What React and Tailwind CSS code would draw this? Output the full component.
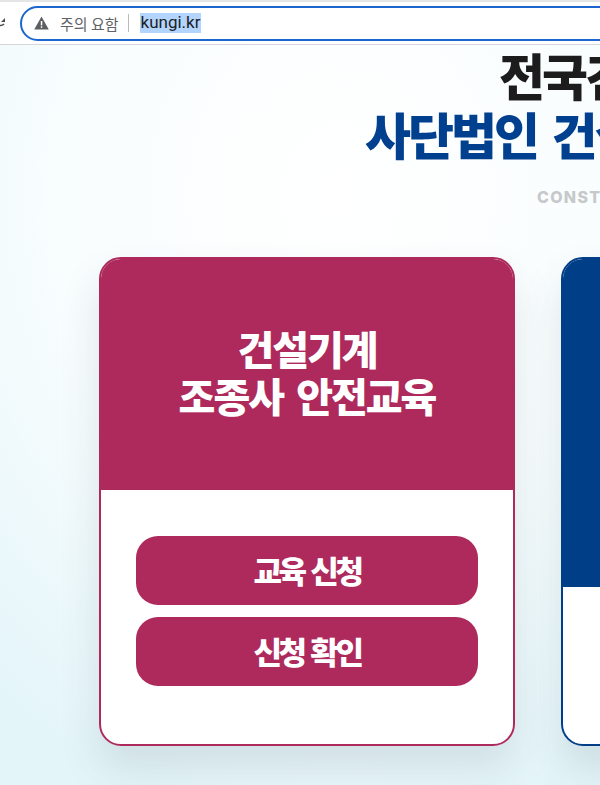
import React from 'react';

const kr = "font-['Noto_Sans_CJK_KR',sans-serif]";

function AddressBar() {
  return (
    <div className="h-[45px] shrink-0 flex items-center bg-white border-t-2 border-t-[#e4e5e7] border-b border-b-[#d5d7da] pr-0 overflow-hidden">
      <svg className="w-[6px] h-[14px] shrink-0" viewBox="0 0 6 14" fill="none">
        <path d="M-4 7a5 5 0 0 0 8 1" stroke="#4b4d50" strokeWidth="1.6" />
        <path d="M1 6h4v-4z" fill="#4b4d50" />
      </svg>
      <div className="ml-[14px] w-[640px] shrink-0 h-[35px] rounded-l-full border-2 border-[#1b66cf] flex items-center pl-[12px]">
        <svg className="w-[15px] h-[14px] shrink-0" viewBox="0 0 15 14">
          <path d="M7.5 0.5 14.8 13.5H0.2Z" fill="#5c5e62" />
          <rect x="6.8" y="5" width="1.5" height="4.4" fill="#fff" />
          <rect x="6.8" y="10.3" width="1.5" height="1.5" fill="#fff" />
        </svg>
        <span className={`ml-[11px] text-[15px] leading-none text-[#5f6368] ${kr}`}>주의 요함</span>
        <div className="ml-[9px] w-px h-[18px] bg-[#b9bbbe]" />
        <span className="ml-[11px] px-px h-[20px] flex items-center bg-[#b3d4fc] text-[17px] text-[#202124] font-['Roboto',sans-serif]">kungi.kr</span>
      </div>
    </div>
  );
}

function Card({ border, bg, headerH, title, buttons }) {
  return (
    <div className={`w-[416px] h-[489px] shrink-0 rounded-[22px] border-2 overflow-hidden bg-white flex flex-col ${border}`}>
      <div className={`shrink-0 flex items-center justify-center pb-[5px] ${bg}`} style={{ height: headerH }}>
        {title && (
          <h2 className={`text-center text-white text-[40px] leading-[47px] font-black tracking-[-2px] [word-spacing:6px] ${kr}`}>
            {title[0]}<br />{title[1]}
          </h2>
        )}
      </div>
      {buttons && (
        <div className="flex flex-col gap-[12px] px-[35px] pt-[46px]">
          {buttons.map((b) => (
            <button key={b} className={`h-[69px] rounded-[22px] text-white text-[31px] font-black tracking-[-3.4px] [word-spacing:3px] ${kr} ${bg}`}>{b}</button>
          ))}
        </div>
      )}
    </div>
  );
}

export default function App() {
  return (
    <div className="w-[600px] h-[785px] overflow-hidden flex flex-col bg-white">
      <AddressBar />
      <main className="flex-1 overflow-hidden bg-[radial-gradient(ellipse_530px_640px_at_340px_150px,#ffffff_0%,#f8fdfe_55%,#e4f5f9_100%)]">
        <div className={`pl-[499px] h-[58px] whitespace-nowrap text-[50px] leading-[58px] font-black tracking-[-3px] text-[#1c1c1c] ${kr}`}>전국건설기계</div>
        <div className={`pl-[365px] h-[60px] whitespace-nowrap text-[50px] leading-[60px] font-black tracking-[-3px] [word-spacing:6px] text-[#00408f] ${kr}`}>사단법인 건설기계</div>
        <div className="pl-[537px] mt-[24px] h-[20px] whitespace-nowrap text-[16px] leading-[20px] font-extrabold tracking-[1.3px] text-[#c6c8ca] font-['Inter',sans-serif]">CONSTRUCTION</div>
        <div className="flex gap-[46px] pl-[99px] mt-[50px]">
          <div className="shadow-[0_22px_40px_rgba(40,70,80,0.13)] rounded-[22px]">
            <Card
              border="border-[#ae2a5c]"
              bg="bg-[#ae2a5c]"
              headerH={231}
              title={['건설기계', '조종사 안전교육']}
              buttons={['교육 신청', '신청 확인']}
            />
          </div>
          <div className="shadow-[0_22px_40px_rgba(40,70,80,0.13)] rounded-[22px]">
            <Card border="border-[#013e88]" bg="bg-[#013e88]" headerH={328} />
          </div>
        </div>
      </main>
    </div>
  );
}
